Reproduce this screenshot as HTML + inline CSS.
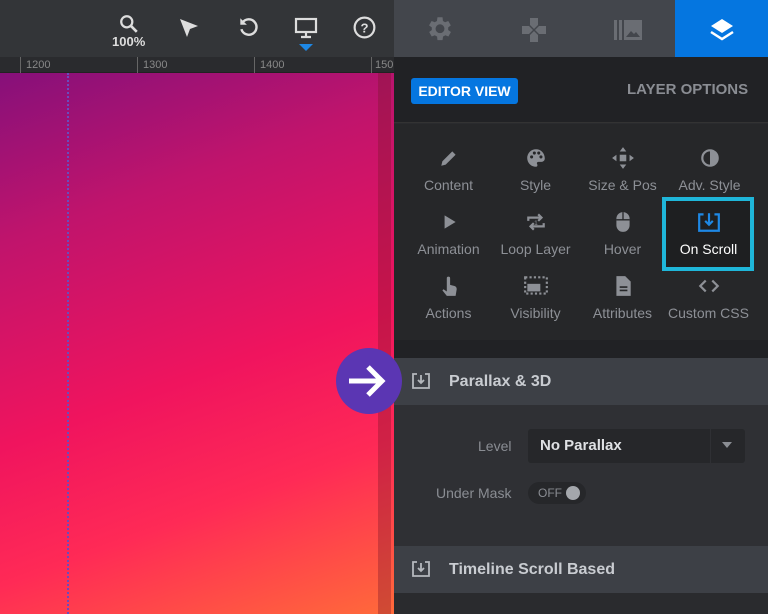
<!DOCTYPE html>
<html><head><style>
*{margin:0;padding:0;box-sizing:border-box}
body{width:768px;height:614px;overflow:hidden;background:#2a2b2e;font-family:"Liberation Sans",sans-serif;position:relative}
.abs{position:absolute}
.top{left:0;top:0;width:394px;height:57px;background:#333538}
.ruler{left:0;top:57px;width:394px;height:16px;background:#2a2b2e;border-bottom:1px solid #222}
.canvas{left:0;top:73px;width:394px;height:541px;background:linear-gradient(160deg,#86107a 0%,#c0146c 25%,#f0145e 55%,#ff2a56 75%,#ff6a3a 100%)}
.strip{left:378px;top:73px;width:13px;height:541px;background:rgba(120,20,40,.35)}
.tabs{left:394px;top:0;width:374px;height:57px;background:#43464c}
.tabact{left:675px;top:0;width:93px;height:57px;background:#0576e0}
.hdr{left:394px;top:57px;width:374px;height:66px;background:#212225;border-bottom:1px solid #333}
.grid{left:394px;top:124px;width:374px;height:234px;background:#262729}
.cell{position:absolute;width:87px;text-align:center;color:#8d9096;font-size:14px}
.cell svg{display:block;margin:0 auto 8px}
.sec{left:394px;width:374px;height:47px;background:#3d4046;color:#c9ccd1;font-size:16px;font-weight:bold;line-height:47px;padding-left:55px}
.body{left:394px;top:405px;width:374px;height:141px;background:#2f3034}
</style></head><body>
<div class="abs top"></div>
<svg class="abs" style="left:119px;top:14px" width="20" height="20" viewBox="0 0 18 18"><circle cx="7" cy="7" r="5" fill="none" stroke="#ddd" stroke-width="2"/><path d="M11 11l5 5" stroke="#ddd" stroke-width="2.4"/></svg>
<div class="abs" style="left:112px;top:34px;color:#ddd;font-size:13px;font-weight:bold">100%</div>
<svg class="abs" style="left:179px;top:18px" width="20" height="20" viewBox="0 0 20 20"><path d="M1 1l18 7-8 3-3 8z" fill="#ddd"/></svg>
<svg class="abs" style="left:237px;top:16px" width="22" height="22" viewBox="0 0 20 20"><path d="M5 6a7 7 0 1 1 -1 6" fill="none" stroke="#ddd" stroke-width="2.2"/><path d="M3 2v6h6z" fill="#ddd"/></svg>
<svg class="abs" style="left:294px;top:17px" width="24" height="22" viewBox="0 0 24 22"><rect x="2" y="2" width="20" height="13" fill="none" stroke="#ddd" stroke-width="2.2"/><path d="M12 15v4M7 20h10" stroke="#ddd" stroke-width="2.2"/></svg>
<svg class="abs" style="left:299px;top:44px" width="14" height="8"><path d="M0 0h14L7 7z" fill="#1e88e5"/></svg>
<svg class="abs" style="left:353px;top:16px" width="23" height="23" viewBox="0 0 21 21"><circle cx="10.5" cy="10.5" r="9" fill="none" stroke="#ddd" stroke-width="2"/><text x="10.5" y="15" fill="#ddd" font-size="12" font-weight="bold" text-anchor="middle" font-family="Liberation Sans">?</text></svg>
<div class="abs ruler"></div>
<div class="abs" style="left:20px;top:57px;width:1px;height:16px;background:#666"></div>
<div class="abs" style="left:137px;top:57px;width:1px;height:16px;background:#666"></div>
<div class="abs" style="left:254px;top:57px;width:1px;height:16px;background:#666"></div>
<div class="abs" style="left:371px;top:57px;width:1px;height:16px;background:#666"></div>
<div class="abs" style="left:26px;top:59px;color:#888;font-size:11px">1200</div>
<div class="abs" style="left:143px;top:59px;color:#888;font-size:11px">1300</div>
<div class="abs" style="left:260px;top:59px;color:#888;font-size:11px">1400</div>
<div class="abs" style="left:375px;top:59px;color:#888;font-size:11px">150</div>
<div class="abs canvas"></div>
<div class="abs strip"></div>
<div class="abs" style="left:67px;top:73px;height:541px;border-left:2px dotted #6a4bbf"></div>
<div class="abs tabs"></div>
<div class="abs tabact"></div>
<svg class="abs" style="left:426px;top:16px" width="28" height="28" viewBox="2 2 22 22"><path fill="#6a6d73" d="M19.4 13a7.8 7.8 0 0 0 0-2l2.1-1.6-2-3.5-2.5 1a7.3 7.3 0 0 0-1.7-1L15 3h-4l-.4 2.9a7.3 7.3 0 0 0-1.7 1l-2.5-1-2 3.5L6.6 11a7.8 7.8 0 0 0 0 2l-2.1 1.6 2 3.5 2.5-1a7.3 7.3 0 0 0 1.7 1L11 21h4l.4-2.9a7.3 7.3 0 0 0 1.7-1l2.5 1 2-3.5zM13 15.5a3.5 3.5 0 1 1 0-7 3.5 3.5 0 0 1 0 7z"/></svg>
<svg class="abs" style="left:521px;top:17px" width="26" height="26" viewBox="0 0 26 26"><path fill="#6a6d73" d="M9 1h8v7l-4 4-4-4zM9 25h8v-7l-4-4-4 4zM1 9v8h7l4-4-4-4zM25 9v8h-7l-4-4 4-4z"/></svg>
<svg class="abs" style="left:614px;top:19px" width="30" height="22" viewBox="0 0 30 22"><rect x="0" y="1" width="3" height="20" fill="#6a6d73"/><rect x="5" y="1" width="3" height="20" fill="#6a6d73"/><rect x="10" y="1" width="18" height="20" fill="#6a6d73"/><path d="M12 18l5-6 3 3 2-2 4 5z" fill="#43464c"/></svg>
<svg class="abs" style="left:709px;top:17px" width="26" height="26" viewBox="0 0 26 26"><path fill="#fff" d="M13 2l11 7-11 7-11-7z"/><path d="M2 15l11 7 11-7" fill="none" stroke="#fff" stroke-width="2.5"/></svg>
<div class="abs hdr"></div>
<div class="abs" style="left:411px;top:78px;width:107px;height:26px;background:#0576e0;border-radius:3px;color:#fff;font-weight:bold;font-size:14px;line-height:26px;text-align:center">EDITOR VIEW</div>
<div class="abs" style="left:627px;top:81px;color:#8a8d93;font-weight:bold;font-size:15px">LAYER OPTIONS</div>
<div class="abs grid"></div>
<div class="cell" style="left:405px;top:147px"><svg width="22" height="22" viewBox="0 0 20 20"><path d="M3 17l1-4 9-9 3 3-9 9z" fill="#8d9096"/></svg>Content</div>
<div class="cell" style="left:492px;top:147px"><svg width="22" height="22" viewBox="0 0 20 20"><path d="M10 2a8 8 0 0 0 0 16c1.5 0 1.5-1.5 1-2.5s0-2 1.5-2H15a3 3 0 0 0 3-3C18 5.5 14.5 2 10 2z" fill="#8d9096"/><circle cx="6" cy="9" r="1.4" fill="#262729"/><circle cx="8.5" cy="5.5" r="1.4" fill="#262729"/><circle cx="12.5" cy="5.5" r="1.4" fill="#262729"/><circle cx="14.5" cy="9" r="1.4" fill="#262729"/></svg>Style</div>
<div class="cell" style="left:579px;top:147px"><svg width="24" height="22" viewBox="0 0 22 20"><path d="M11 0l3 4h-6zM11 20l3-4h-6zM1 10l4-3v6zM21 10l-4-3v6z" fill="#8d9096"/><rect x="8" y="7" width="6" height="6" fill="#8d9096"/></svg>Size &amp; Pos</div>
<div class="cell" style="left:666px;top:147px"><svg width="22" height="22" viewBox="0 0 20 20"><circle cx="10" cy="10" r="7" fill="none" stroke="#8d9096" stroke-width="2"/><path d="M10 3a7 7 0 0 1 0 14z" fill="#8d9096"/></svg>Adv. Style</div>
<div class="abs" style="left:662px;top:197px;width:92px;height:74px;border:4px solid #1fb6d9;background:#1e1f21"></div>
<div class="cell" style="left:405px;top:211px"><svg width="22" height="22" viewBox="0 0 20 20"><path d="M6 4l10 6-10 6z" fill="#8d9096"/></svg>Animation</div>
<div class="cell" style="left:492px;top:211px"><svg width="22" height="22" viewBox="0 0 20 20"><path d="M3 9V6h12M12 3l3 3-3 3M17 11v3H5M8 17l-3-3 3-3" fill="none" stroke="#8d9096" stroke-width="2"/><text x="10" y="12.5" font-size="6" fill="#8d9096" text-anchor="middle">1</text></svg>Loop Layer</div>
<div class="cell" style="left:579px;top:211px"><svg width="22" height="22" viewBox="0 0 20 20"><rect x="4" y="1" width="12" height="18" rx="6" fill="#8d9096"/><path d="M4 8h12M10 1v7" stroke="#262729" stroke-width="1.2"/></svg>Hover</div>
<div class="cell" style="left:665px;top:211px;color:#fff"><svg width="24" height="22" viewBox="0 0 22 20"><path d="M6 3H2v15h18V3h-4" fill="none" stroke="#1e88e5" stroke-width="2"/><path d="M11 2v10M7.5 9l3.5 3.5L14.5 9" fill="none" stroke="#1e88e5" stroke-width="2"/></svg>On Scroll</div>
<div class="cell" style="left:405px;top:275px"><svg width="22" height="22" viewBox="0 0 20 20"><path d="M8 10V3a1.5 1.5 0 0 1 3 0v6l4 1c1.5.5 2 1.5 2 3l-1 6H8l-4-5 1-1 3 2z" fill="#8d9096"/></svg>Actions</div>
<div class="cell" style="left:492px;top:275px"><svg width="26" height="22" viewBox="0 0 24 20"><rect x="2" y="2" width="20" height="15" fill="none" stroke="#8d9096" stroke-width="2" stroke-dasharray="2 2"/><rect x="4" y="8" width="12" height="7" fill="#8d9096"/></svg>Visibility</div>
<div class="cell" style="left:579px;top:275px"><svg width="22" height="22" viewBox="0 0 20 20"><path d="M4 1h8l5 5v13H4z" fill="#8d9096"/><path d="M7 11h7M7 14h7" stroke="#262729" stroke-width="1.5"/></svg>Attributes</div>
<div class="cell" style="left:665px;top:275px"><svg width="24" height="22" viewBox="0 0 22 20"><path d="M8 5l-5 5 5 5M14 5l5 5-5 5" fill="none" stroke="#8d9096" stroke-width="2"/></svg>Custom CSS</div>
<div class="abs" style="left:394px;top:340px;width:374px;height:18px;background:#212225"></div>
<div class="abs sec" style="top:358px">Parallax &amp; 3D</div>
<svg class="abs" style="left:411px;top:372px" width="20" height="18" viewBox="0 0 20 18"><path d="M6 2H2v14h16V2h-4" fill="none" stroke="#b5b8bd" stroke-width="1.8"/><path d="M10 3v8M7 8l3 3 3-3" fill="none" stroke="#b5b8bd" stroke-width="1.8"/></svg>
<div class="abs body"></div>
<div class="abs" style="left:478px;top:438px;color:#8a8d93;font-size:14px">Level</div>
<div class="abs" style="left:528px;top:429px;width:217px;height:34px;background:#26272a;border-radius:3px;color:#dfe1e4;font-size:15px;font-weight:bold;line-height:34px;padding-left:12px">No Parallax</div>
<div class="abs" style="left:710px;top:429px;width:1px;height:34px;background:#2f3034"></div>
<svg class="abs" style="left:722px;top:442px" width="10" height="6"><path d="M0 0h10L5 6z" fill="#8a8d93"/></svg>
<div class="abs" style="left:436px;top:485px;color:#8a8d93;font-size:14px">Under Mask</div>
<div class="abs" style="left:528px;top:482px;width:58px;height:22px;background:#26272a;border-radius:11px;color:#8a8d93;font-size:12px;line-height:22px;padding-left:10px">OFF</div>
<div class="abs" style="left:566px;top:486px;width:14px;height:14px;border-radius:50%;background:#a4a7ac"></div>
<div class="abs sec" style="top:546px">Timeline Scroll Based</div>
<svg class="abs" style="left:411px;top:560px" width="20" height="18" viewBox="0 0 20 18"><path d="M6 2H2v14h16V2h-4" fill="none" stroke="#b5b8bd" stroke-width="1.8"/><path d="M10 3v8M7 8l3 3 3-3" fill="none" stroke="#b5b8bd" stroke-width="1.8"/></svg>
<div class="abs" style="left:336px;top:348px;width:66px;height:66px;border-radius:50%;background:#5b36b3"></div>
<svg class="abs" style="left:346px;top:361px" width="44" height="40" viewBox="0 0 44 40"><path d="M3 20h34M22 6l14 14-14 14" fill="none" stroke="#fff" stroke-width="5"/></svg>
</body></html>
